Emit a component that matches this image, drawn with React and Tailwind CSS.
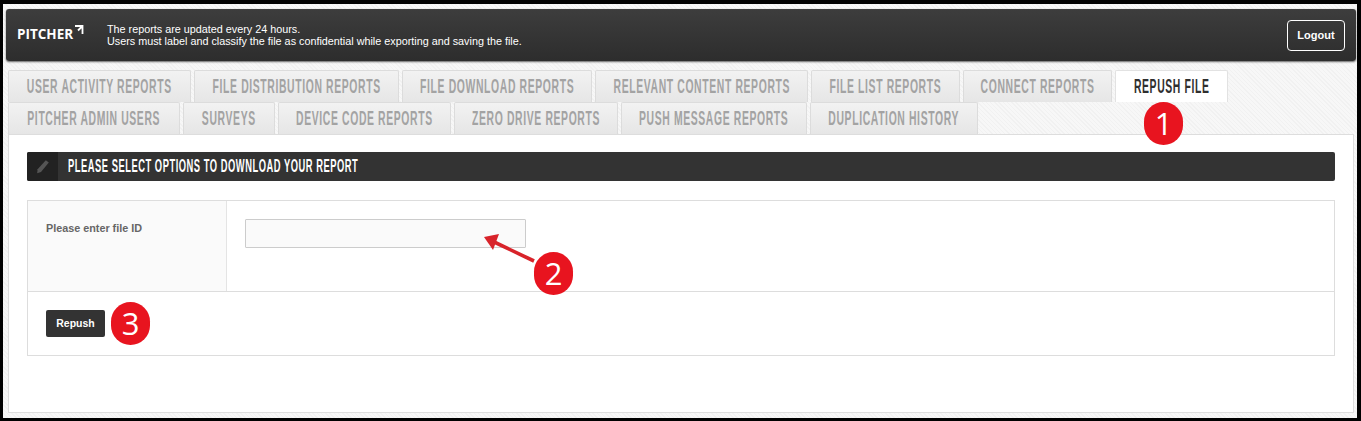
import { Fragment } from 'react'

const row1 = [
  ['USER ACTIVITY REPORTS', 'w-[183px]'],
  ['FILE DISTRIBUTION REPORTS', 'w-[205px]'],
  ['FILE DOWNLOAD REPORTS', 'w-[190px]'],
  ['RELEVANT CONTENT REPORTS', 'w-[213px]'],
  ['FILE LIST REPORTS', 'w-[149px]'],
  ['CONNECT REPORTS', 'w-[149px]'],
  ['REPUSH FILE', 'w-[113px]', true],
]

const row2 = [
  ['PITCHER ADMIN USERS', 'w-[172px]'],
  ['SURVEYS', 'w-[92px]'],
  ['DEVICE CODE REPORTS', 'w-[173px]'],
  ['ZERO DRIVE REPORTS', 'w-[164px]'],
  ['PUSH MESSAGE REPORTS', 'w-[186px]'],
  ['DUPLICATION HISTORY', 'w-[168px]'],
]

const arial = "font-['Liberation_Sans',Arial,sans-serif]"

function Tab({ label, width, active }) {
  return (
    <div
      className={`${width} h-[32px] shrink-0 flex items-center justify-center overflow-hidden border border-b-0 rounded-t-[2px] ${
        active ? 'bg-white border-[#e2e2e2] text-[#2f2f2f]' : 'bg-gradient-to-b from-[#f2f2f2] to-[#e6e6e6] border-[#dcdcdc] text-[#a3a3a3]'
      }`}
    >
      <span className={`${arial} -mt-[2px] whitespace-nowrap font-bold text-[20px] leading-none tracking-[1.2px] scale-x-[.52]`}>{label}</span>
    </div>
  )
}

function Badge({ n, className }) {
  return (
    <div className={`absolute w-[39px] h-[43px] rounded-full bg-[#e8141f] text-white flex items-center justify-center font-['Open_Sans',sans-serif] font-normal text-[31px] leading-none ${className}`}>
      {n}
    </div>
  )
}

export default function App() {
  return (
    <div className="relative w-[1361px] h-[421px] bg-black pt-[4px] pl-[3px] pr-[4px] pb-[3px] overflow-hidden">
      <div className="h-full bg-[repeating-linear-gradient(45deg,#f1f1f1_0,#f1f1f1_1px,#f7f7f7_1px,#f7f7f7_3px)] pt-[5px] pl-[3px] pr-[1px] flex flex-col">
        <div className={`${arial} h-[52px] shrink-0 rounded-[3px] bg-gradient-to-b from-[#3d3d3d] to-[#2d2d2d] shadow-[0_1px_2px_rgba(0,0,0,.6)] flex items-center pl-[11px] pr-[11px] text-white`}>
          <div className="relative w-[90px] flex items-center">
            <span className="font-['Open_Sans',sans-serif] font-bold text-[13.5px] leading-none">PITCHER</span>
            <svg className="absolute left-[55px] -top-[3px]" width="12" height="10" viewBox="0 0 12 10" fill="none" stroke="#fff" strokeWidth="1.8">
              <path d="M3 1h7.5v8M9.5 2 6 5.5" />
            </svg>
          </div>
          <div className="text-[10.8px] leading-[12px]">
            <p>The reports are updated every 24 hours.</p>
            <p>Users must label and classify the file as confidential while exporting and saving the file.</p>
          </div>
          <button className="ml-auto w-[58px] h-[31px] rounded-[4px] border border-white text-white font-bold text-[11px]">Logout</button>
        </div>

        <div className="ml-[2px] mt-[9px] flex gap-[3px]">
          {row1.map(([label, width, active]) => (
            <Fragment key={label}>
              <Tab label={label} width={width} active={active} />
            </Fragment>
          ))}
        </div>
        <div className="ml-[2px] flex gap-[3px]">
          {row2.map(([label, width]) => (
            <Tab key={label} label={label} width={width} />
          ))}
        </div>

        <div className="ml-[2px] mr-[2px] h-[279px] shrink-0 bg-white border border-[#dddddd] pt-[17px] px-[18px]">
          <div className="h-[29px] bg-[#333333] rounded-[2px] flex items-center overflow-hidden">
            <div className="w-[31px] h-full bg-[#222222] flex items-center justify-center">
              <svg width="14" height="15" viewBox="0 0 14 15" fill="#555555">
                <path d="M9.8 1.2 12.8 3.6 5 13 1.2 14.2 1.6 10.2Z" />
              </svg>
            </div>
            <span className={`${arial} ml-[10px] -mt-[2px] text-white font-bold text-[18px] leading-none tracking-[1px] whitespace-nowrap origin-left scale-x-[.52]`}>
              PLEASE SELECT OPTIONS TO DOWNLOAD YOUR REPORT
            </span>
          </div>

          <div className={`${arial} mt-[19px] h-[156px] border border-[#dddddd]`}>
            <div className="h-[91px] flex border-b border-[#dddddd]">
              <div className="w-[199px] bg-[#fafafa] border-r border-[#e4e4e4] pl-[18px] pt-[21px] text-[10.8px] leading-[12px] font-bold text-[#666666]">
                Please enter file ID
              </div>
              <div className="pl-[18px] pt-[18px]">
                <input className="block w-[281px] h-[29px] bg-[#fafafa] border border-[#cccccc] rounded-[1px] outline-none" />
              </div>
            </div>
            <div className="pl-[18px] pt-[18px]">
              <button className="w-[59px] h-[27px] bg-[#333333] rounded-[2px] text-white font-bold text-[10.5px]">Repush</button>
            </div>
          </div>
        </div>
      </div>

      <Badge n="1" className="left-[1144px] top-[102px]" />
      <Badge n="2" className="left-[534px] top-[252px]" />
      <Badge n="3" className="left-[111px] top-[302px]" />

      <svg className="absolute left-[480px] top-[232px]" width="60" height="36" viewBox="0 0 60 36" fill="none">
        <path d="M54 29 12 9" stroke="#d8232a" strokeWidth="3.6" />
        <path d="M4 5 19 2 13 18Z" fill="#d8232a" />
      </svg>
    </div>
  )
}
